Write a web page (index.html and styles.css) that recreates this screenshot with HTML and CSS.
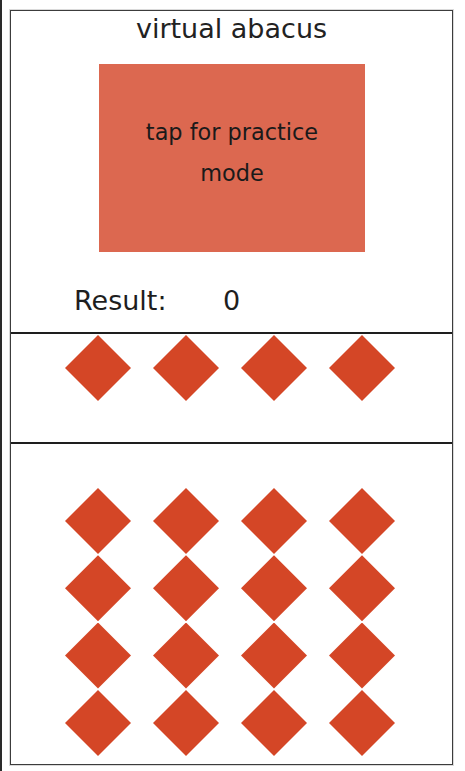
FILE: index.html
```html
<!DOCTYPE html>
<html lang="en">

<head>
    <meta charset="utf-8">
    <meta name="viewport" content="width=device-width, initial-scale=1.0">
    <title>virtual abacus</title>

    <link rel="stylesheet" href="styles.css">
</head>

<body>
    <main class="abacus">
        <section class="top">
            <h1>virtual abacus</h1>
            <button class="practice">tap for practice mode</button>
            <p class="result">Result: <span id="sum">0</span></p>
        </section>

        <!-- heaven beads, worth 5 each -->
        <section class="heaven">
            <div class="rod"><div class="bead"></div></div>
            <div class="rod"><div class="bead"></div></div>
            <div class="rod"><div class="bead"></div></div>
            <div class="rod"><div class="bead"></div></div>
        </section>

        <!-- earth beads, worth 1 each -->
        <section class="earth">
            <div class="rod"><div class="bead"></div><div class="bead"></div><div class="bead"></div><div class="bead"></div></div>
            <div class="rod"><div class="bead"></div><div class="bead"></div><div class="bead"></div><div class="bead"></div></div>
            <div class="rod"><div class="bead"></div><div class="bead"></div><div class="bead"></div><div class="bead"></div></div>
            <div class="rod"><div class="bead"></div><div class="bead"></div><div class="bead"></div><div class="bead"></div></div>
        </section>
    </main>
</body>

</html>
```

FILE: styles.css
```css
body {
    margin: 0;
    border-left: 2px solid #2b2b2b;
    min-height: 100vh;
    box-sizing: border-box;
    background-color: white;
    font-family: "DejaVu Sans", Verdana, sans-serif;
    color: #1e1e1e;
}

.abacus {
    box-sizing: border-box;
    width: 443px;
    height: 755px;
    margin: 10px 0 0 8px;
    border: 1px solid #3c3c3c;
    box-shadow: 0 0 0 1px #dadada;
    display: flex;
    flex-direction: column;
}

.top {
    height: 321px;
    display: flex;
    flex-direction: column;
    align-items: center;
}

h1 {
    font-size: 27px;
    font-weight: normal;
    line-height: 30px;
    margin: 3px 0 20px;
    color: #222;
}

.practice {
    box-sizing: border-box;
    width: 266px;
    height: 188px;
    margin-left: 1px;
    padding: 48px 20px 0;
    border: none;
    background-color: #dc6850;
    font-family: inherit;
    font-size: 22.4px;
    line-height: 41px;
    color: #1a1a1a;
    display: flex;
    align-items: flex-start;
    justify-content: center;
    text-align: center;
}

.result {
    align-self: flex-start;
    margin: 34px 0 0 63px;
    font-size: 27px;
    line-height: 30px;
}

#sum {
    margin-left: 48px;
}

.heaven {
    height: 107px;
    border-top: 2px solid #1e1e1e;
    border-bottom: 2px solid #1e1e1e;
    display: flex;
    gap: 22px;
    padding: 1px 0 0 54px;
}

.earth {
    flex: 1;
    display: flex;
    gap: 22px;
    padding: 44px 0 0 54px;
}

.rod {
    display: flex;
    flex-direction: column;
    gap: 1.3px;
}

.bead {
    width: 66px;
    height: 66px;
    background-color: #d44626;
    clip-path: polygon(50% 0, 100% 50%, 50% 100%, 0 50%);
}
```
